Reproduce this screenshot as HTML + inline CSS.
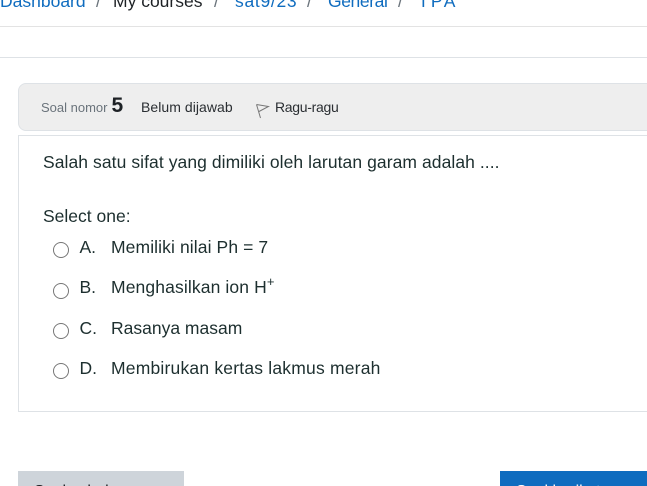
<!DOCTYPE html>
<html><head><meta charset="utf-8"><style>
html,body{margin:0;padding:0;background:#fff}
#p{position:relative;width:647px;height:486px;overflow:hidden;background:#fff;font-family:"Liberation Sans",sans-serif}
#p div{position:absolute}
.t{white-space:nowrap;line-height:20px;height:20px}
.b{color:#0f6cbf;font-size:17.5px}
.m{color:#1d2125;font-size:17.5px}
.s{color:#6a737b;font-size:17.5px}
.q{color:#1d2f2f;font-size:17.5px}
.r{width:14px;height:14px;border:1.5px solid #777;border-radius:50%;left:53px;background:#fff}
</style></head><body><div id="p">
<div class="t b" style="left:0;top:-9px">Dashboard</div>
<div class="t s" style="left:96px;top:-9px">/</div>
<div class="t m" style="left:113px;top:-9px">My courses</div>
<div class="t s" style="left:214px;top:-9px">/</div>
<div class="t b" style="left:235px;top:-9px;letter-spacing:.7px">sat9/23</div>
<div class="t s" style="left:307px;top:-9px">/</div>
<div class="t b" style="left:328px;top:-9px;letter-spacing:-.4px">General</div>
<div class="t s" style="left:398px;top:-9px">/</div>
<div class="t b" style="left:418px;top:-9px;letter-spacing:-1.2px">T P A</div>
<div style="left:0;top:26px;width:647px;height:1px;background:#e3e3e3"></div>
<div style="left:0;top:57px;width:647px;height:1px;background:#dee2e6"></div>
<div style="left:18px;top:83px;width:660px;height:46px;background:#eeeeee;border:1px solid #dee2e6;border-radius:8px"></div>
<div class="t" style="left:41px;top:98px;font-size:13px;color:#6a737b">Soal nomor</div>
<div class="t" style="left:111.5px;top:96px;font-size:21px;font-weight:bold;color:#1d2125">5</div>
<div class="t" style="left:141px;top:97px;font-size:14px;letter-spacing:.05px;color:#2a2e32">Belum dijawab</div>
<svg style="position:absolute;left:255px;top:103px" width="15" height="16" viewBox="0 0 15 16" fill="none" stroke="#777" stroke-width="1"><path d="M1.5 1.5L5.5 15M1.5 1.5L13.5 3.5L4 8.5"/></svg>
<div class="t" style="left:275px;top:97px;font-size:14px;letter-spacing:-.3px;color:#2a2e32">Ragu-ragu</div>
<div style="left:18px;top:135px;width:660px;height:275px;background:#fff;border:1px solid #dee2e6"></div>
<div class="t q" style="left:43px;top:152px;letter-spacing:.07px">Salah satu sifat yang dimiliki oleh larutan garam adalah ....</div>
<div class="t q" style="left:43px;top:206px">Select one:</div>
<div class="r" style="top:242px"></div>
<div class="t q" style="left:79.5px;top:237px">A.</div>
<div class="t q" style="left:111px;top:237px;letter-spacing:.1px">Memiliki nilai Ph = 7</div>
<div class="r" style="top:282.5px"></div>
<div class="t q" style="left:79.5px;top:277px">B.</div>
<div class="t q" style="left:111px;top:277px;letter-spacing:.12px">Menghasilkan ion H<sup style="font-size:13px;line-height:0">+</sup></div>
<div class="r" style="top:323px"></div>
<div class="t q" style="left:79.5px;top:318px">C.</div>
<div class="t q" style="left:111px;top:318px">Rasanya masam</div>
<div class="r" style="top:363px"></div>
<div class="t q" style="left:79.5px;top:358px">D.</div>
<div class="t q" style="left:111px;top:358px;letter-spacing:.2px">Membirukan kertas lakmus merah</div>
<div style="left:18px;top:471px;width:166px;height:30px;background:#ced4da"></div>
<div class="t" style="left:34px;top:482px;font-size:16px;color:#1d2125">Soal sebelumnya</div>
<div style="left:500px;top:471px;width:160px;height:30px;background:#0f6cbf"></div>
<div class="t" style="left:516px;top:482px;font-size:16px;color:#fff">Soal berikutnya</div>
</div></body></html>
